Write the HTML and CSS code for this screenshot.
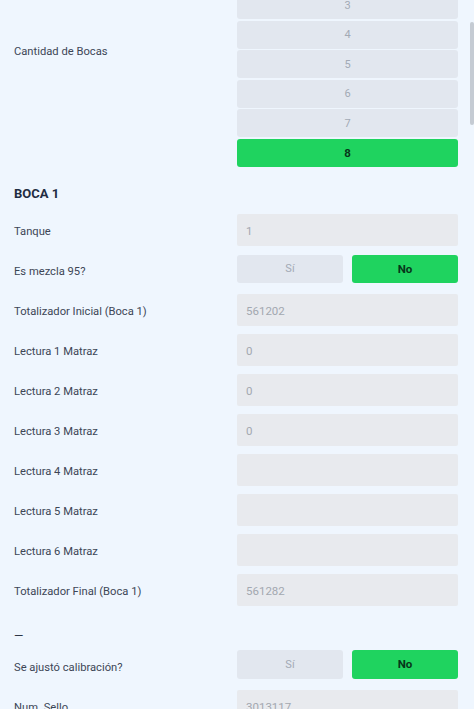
FILE: index.html
```html
<!DOCTYPE html>
<html lang="es">
<head>
<meta charset="utf-8">
<title>Calibración</title>
<link rel="stylesheet" href="styles.css">
</head>
<body>
<div class="scroll-thumb"></div>
<main class="form">
  <div class="row row-tall">
    <span class="label">Cantidad de Bocas</span>
    <div class="options">
      <button class="opt">1</button>
      <button class="opt">2</button>
      <button class="opt">3</button>
      <button class="opt">4</button>
      <button class="opt">5</button>
      <button class="opt">6</button>
      <button class="opt">7</button>
      <button class="opt opt-on">8</button>
    </div>
  </div>

  <h2 class="section">BOCA 1</h2>

  <div class="row"><span class="label">Tanque</span><div class="input">1</div></div>
  <div class="row">
    <span class="label">Es mezcla 95?</span>
    <div class="toggle"><button class="tbtn">Sí</button><button class="tbtn tbtn-on">No</button></div>
  </div>
  <div class="row"><span class="label">Totalizador Inicial (Boca 1)</span><div class="input">561202</div></div>
  <div class="row"><span class="label">Lectura 1 Matraz</span><div class="input">0</div></div>
  <div class="row"><span class="label">Lectura 2 Matraz</span><div class="input">0</div></div>
  <div class="row"><span class="label">Lectura 3 Matraz</span><div class="input">0</div></div>
  <div class="row"><span class="label">Lectura 4 Matraz</span><div class="input"></div></div>
  <div class="row"><span class="label">Lectura 5 Matraz</span><div class="input"></div></div>
  <div class="row"><span class="label">Lectura 6 Matraz</span><div class="input"></div></div>
  <div class="row"><span class="label">Totalizador Final (Boca 1)</span><div class="input">561282</div></div>

  <div class="divider">—</div>

  <div class="row row-alt">
    <span class="label">Se ajustó calibración?</span>
    <div class="toggle"><button class="tbtn">Sí</button><button class="tbtn tbtn-on">No</button></div>
  </div>
  <div class="row"><span class="label">Num. Sello</span><div class="input">3013117</div></div>
  <div class="row"><span class="label">Observaciones</span><div class="input"></div></div>
</main>
</body>
</html>
```

FILE: styles.css
```css
html, body {
  margin: 0;
  padding: 0;
  background: #eff6fe;
  font-family: Roboto, "Noto Sans", "Liberation Sans", sans-serif;
  overflow: hidden;
}

.form {
  margin-top: -68px;
  padding: 0 16px 0 14px;
  display: flex;
  flex-direction: column;
  gap: 8px;
}

.row {
  display: grid;
  grid-template-columns: 1fr 221px;
  column-gap: 2px;
  align-items: center;
  min-height: 32px;
}

.label {
  font-size: 11.2px;
  color: #3d4656;
  line-height: 16px;
  padding-top: 5px;
}

.options {
  display: flex;
  flex-direction: column;
  gap: 1.5px;
}

.opt, .tbtn {
  border: 0;
  margin: 0;
  font-family: inherit;
  background: #e2e7ef;
  color: #a3aab5;
  font-size: 11px;
  border-radius: 3px;
  padding: 0;
}

.opt {
  height: 28px;
}

.opt-on, .tbtn-on {
  background: #1fd35f;
  color: #07361a;
  font-weight: 700;
  font-size: 11.5px;
}

.section {
  margin: 0;
  padding: 10px 0 3px;
  font-size: 13px;
  line-height: 18px;
  font-weight: 700;
  color: #1f2d42;
}

.input {
  height: 32px;
  box-sizing: border-box;
  background: #e8eaee;
  border-radius: 2px;
  color: #a3a8b0;
  font-size: 11.5px;
  line-height: 34px;
  padding: 0 9px;
}

.toggle {
  display: grid;
  grid-template-columns: 1fr 1fr;
  column-gap: 9px;
  align-self: start;
  margin-top: 1px;
}

.tbtn {
  height: 28px;
}

.row-alt .toggle {
  margin-top: 0;
}

.row-alt .tbtn {
  height: 29px;
}

.divider {
  height: 28px;
  display: flex;
  align-items: flex-end;
  line-height: 12px;
  font-size: 12px;
  color: #2c3546;
}

.scroll-thumb {
  position: fixed;
  right: 0;
  top: 22px;
  width: 4px;
  height: 103px;
  background: #c5cbd3;
  border-radius: 2px;
  z-index: 10;
}
```
